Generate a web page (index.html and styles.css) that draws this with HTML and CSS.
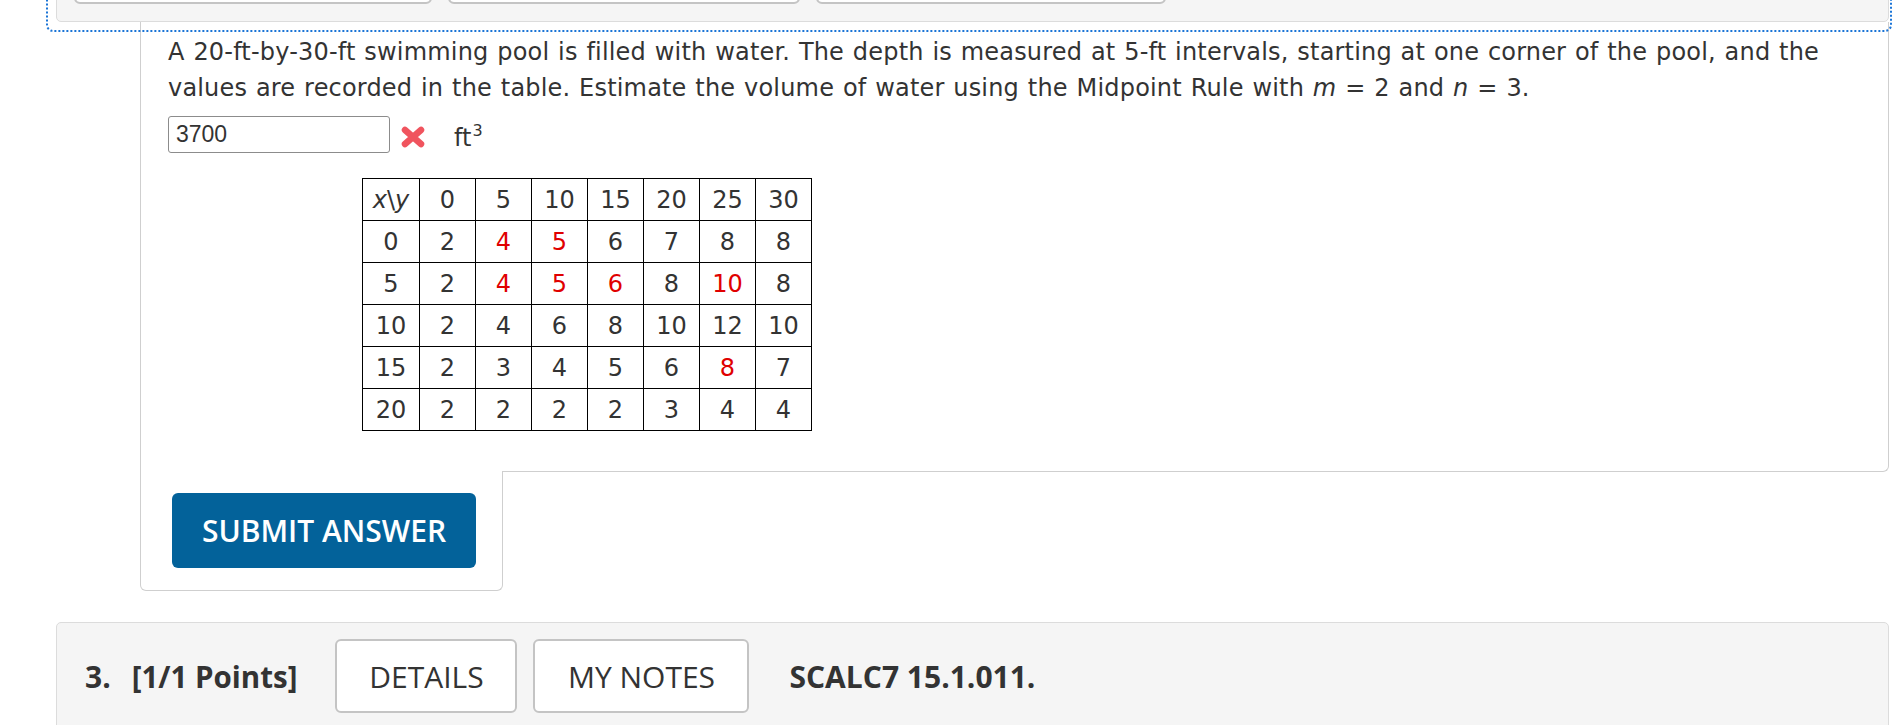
FILE: index.html
```html
<!DOCTYPE html>
<html lang="en">
<head>
<meta charset="utf-8">
<title>Question</title>
<link rel="stylesheet" href="styles.css">
</head>
<body>
<div class="page">
  <div class="qhead">
    <span class="hbtn hbtn-a"></span>
    <span class="hbtn hbtn-b"></span>
    <span class="hbtn hbtn-c"></span>
  </div>
  <div class="qbody">
    <p class="prompt">A 20-ft-by-30-ft swimming pool is filled with water. The depth is measured at 5-ft intervals, starting at one corner of the pool, and the values are recorded in the table. Estimate the volume of water using the Midpoint Rule with <i>m</i> = 2 and <i>n</i> = 3.</p>
    <div class="answer-row">
      <input class="ans" type="text" value="3700" readonly>
      <svg class="xmark" viewBox="0 0 26 24" width="26" height="24" aria-hidden="true">
        <path d="M5 5 L21 19 M21 5 L5 19" stroke="#f0545e" stroke-width="6.5" stroke-linecap="round" fill="none"/>
      </svg>
      <span class="unit">ft<sup>3</sup></span>
    </div>
    <table class="depth">
      <tr><td><i>x</i>\<i>y</i></td><td>0</td><td>5</td><td>10</td><td>15</td><td>20</td><td>25</td><td>30</td></tr>
      <tr><td>0</td><td>2</td><td class="hl">4</td><td class="hl">5</td><td>6</td><td>7</td><td>8</td><td>8</td></tr>
      <tr><td>5</td><td>2</td><td class="hl">4</td><td class="hl">5</td><td class="hl">6</td><td>8</td><td class="hl">10</td><td>8</td></tr>
      <tr><td>10</td><td>2</td><td>4</td><td>6</td><td>8</td><td>10</td><td>12</td><td>10</td></tr>
      <tr><td>15</td><td>2</td><td>3</td><td>4</td><td>5</td><td>6</td><td class="hl">8</td><td>7</td></tr>
      <tr><td>20</td><td>2</td><td>2</td><td>2</td><td>2</td><td>3</td><td>4</td><td>4</td></tr>
    </table>
  </div>
  <div class="submit-box">
    <button class="submit" type="button">SUBMIT ANSWER</button>
  </div>
  <div class="qfoot">
    <span class="qnum">3.</span>
    <span class="qpts">[1/1 Points]</span>
    <button class="fbtn fbtn-details" type="button">DETAILS</button>
    <button class="fbtn fbtn-notes" type="button">MY NOTES</button>
    <span class="qref">SCALC7 15.1.011.</span>
  </div>
</div>
</body>
</html>
```

FILE: styles.css
```css
html, body {
  margin: 0;
  padding: 0;
  background: #ffffff;
  overflow: hidden;
}

.page {
  padding: 0 3px 0 56px;
}

/* header of the previous question (scrolled mostly off-screen) */
.qhead {
  position: relative;
  margin-top: -88px;
  display: flex;
  gap: 16px;
  padding: 17px;
  background: #f5f5f5;
  border: 1px solid #dcdcdc;
  border-radius: 5px;
}

.qhead::after {
  content: "";
  position: absolute;
  left: -11px;
  right: -4px;
  top: -20px;
  bottom: -11px;
  border: 2px dotted #1a74d6;
  border-radius: 7px;
  pointer-events: none;
}

.hbtn {
  display: block;
  height: 74px;
  box-sizing: border-box;
  background: #ffffff;
  border: 2px solid #c4c4c4;
  border-radius: 6px;
}
.hbtn-a { width: 358px; }
.hbtn-b { width: 352px; }
.hbtn-c { width: 350px; }

/* question body */
.qbody {
  margin-left: 84px;
  padding: 12px 27px 40px 27px;
  border: 1px solid #cfcfcf;
  border-top: none;
  border-radius: 0 0 6px 0;
  color: #333333;
  font-family: "DejaVu Sans", Verdana, sans-serif;
}

.prompt {
  margin: 0;
  font-size: 24px;
  line-height: 36px;
  letter-spacing: 0.18px;
  word-spacing: 1px;
}

.answer-row {
  margin-top: 10px;
  display: flex;
  align-items: center;
  height: 37px;
}

.ans {
  width: 222px;
  height: 37px;
  box-sizing: border-box;
  margin: 0;
  padding: 0 7px;
  border: 1px solid #8c8c8c;
  border-radius: 3px;
  background: #ffffff;
  color: #333333;
  font-family: "Liberation Sans", Arial, sans-serif;
  font-size: 23px;
  outline: none;
}

.xmark {
  display: block;
  margin-left: 10px;
  margin-top: 4px;
}

.unit {
  margin-left: 28px;
  font-size: 24px;
  line-height: 28px;
  margin-top: 6px;
}

.unit sup {
  font-size: 16px;
  line-height: 0;
  vertical-align: 10px;
  margin-left: 1px;
}

.depth {
  margin-top: 25px;
  margin-left: 194px;
  border-collapse: collapse;
  font-size: 24px;
  color: #333333;
}

.depth td {
  width: 55px;
  height: 41px;
  padding: 0;
  border: 1px solid #000000;
  text-align: center;
  vertical-align: middle;
}

.depth td:first-child {
  width: 56px;
}

.depth td.hl {
  color: #e00000;
}

/* submit area */
.submit-box {
  position: relative;
  width: 363px;
  box-sizing: border-box;
  margin-left: 84px;
  margin-top: -1px;
  padding: 22px 30px 22px 31px;
  background: #ffffff;
  border: 1px solid #cfcfcf;
  border-top: none;
  border-radius: 0 0 6px 6px;
}

.submit {
  display: block;
  width: 304px;
  height: 75px;
  margin: 0;
  padding: 0;
  border: none;
  border-radius: 6px;
  background: #03629a;
  color: #ffffff;
  font-family: "Open Sans", sans-serif;
  font-weight: 600;
  font-size: 30px;
  white-space: nowrap;
}

/* next question header */
.qfoot {
  margin-top: 31px;
  display: flex;
  align-items: center;
  padding: 16px 28px;
  background: #f5f5f5;
  border: 1px solid #dcdcdc;
  border-radius: 5px;
  font-family: "Open Sans", sans-serif;
  font-size: 30px;
  color: #333333;
}

.qnum {
  font-weight: 700;
  margin-right: 21px;
}

.qpts {
  font-weight: 700;
  font-size: 29.5px;
  margin-right: 38px;
}

.fbtn {
  height: 74px;
  box-sizing: border-box;
  margin: 0;
  padding: 0;
  background: #ffffff;
  border: 2px solid #c4c4c4;
  border-radius: 6px;
  font-family: "Open Sans", sans-serif;
  font-size: 30px;
  color: #333333;
  white-space: nowrap;
  text-align: center;
}

.fbtn-details {
  width: 182px;
  margin-right: 16px;
}

.fbtn-notes {
  width: 216px;
  margin-right: 40px;
}

.qref {
  font-weight: 700;
}
```
